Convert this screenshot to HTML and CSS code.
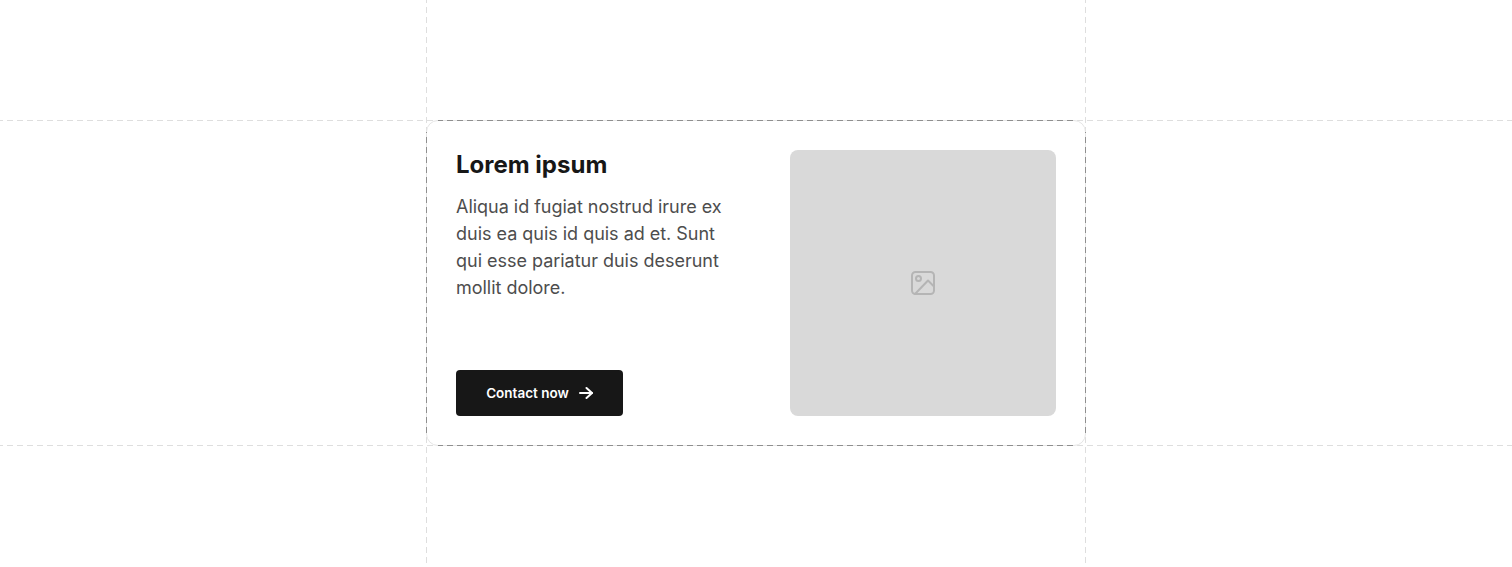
FILE: index.html
```html
<!DOCTYPE html>
<html lang="en">
<head>
  <meta charset="UTF-8" />
  <meta name="viewport" content="width=device-width, initial-scale=1.0"/>
  <title>Lorem ipsum</title>
  <link rel="stylesheet" href="styles.css">
</head>
<body>
  <div class="guide guide-h guide-top"></div>
  <div class="guide guide-h guide-bottom"></div>
  <div class="guide guide-v guide-left"></div>
  <div class="guide guide-v guide-right"></div>
  <div class="card">
    <div class="card-text">
      <div>
        <h2 class="card-title">Lorem ipsum</h2>
        <p class="card-desc">Aliqua id fugiat nostrud irure ex duis ea quis id quis ad et. Sunt qui esse pariatur duis deserunt mollit dolore.</p>
      </div>
      <a class="btn" href="#">
        <span>Contact now</span>
        <svg class="btn-icon" viewBox="0 0 14 14" fill="none" stroke="currentColor" stroke-width="2" stroke-linecap="round" stroke-linejoin="round">
          <path d="M1 7h12"/>
          <path d="M7.5 2l5.5 5-5.5 5"/>
        </svg>
      </a>
    </div>
    <div class="card-image">
      <svg class="image-icon" viewBox="0 0 24 24" fill="none" stroke="currentColor" stroke-width="2" stroke-linecap="round" stroke-linejoin="round">
        <rect x="1" y="1" width="22" height="22" rx="3.5"/>
        <circle cx="7.5" cy="7.5" r="2.5"/>
        <path d="M23 15.5l-6-6L4 23"/>
      </svg>
    </div>
  </div>
</body>
</html>
```

FILE: styles.css
```css
body {
  background: #fff;
  color: #171717;
  font-family: Inter, sans-serif;
  margin: 0;
  height: 567px;
  overflow: hidden;
  padding-top: 120px;
  box-sizing: border-box;
}
.guide {
  position: absolute;
}
.guide-h {
  left: 0;
  right: 0;
  height: 1px;
  background: repeating-linear-gradient(90deg, #dedede 0 3px, transparent 3px 7px, #dedede 7px 10px);
}
.guide-v {
  top: 0;
  bottom: 0;
  width: 1px;
  background: repeating-linear-gradient(180deg, #dedede 0 3px, transparent 3px 7px, #dedede 7px 10px);
}
.guide-top { top: 120px; }
.guide-bottom { top: 445px; }
.guide-left { left: 426px; }
.guide-right { left: 1085px; }
.card {
  position: relative;
  width: 660px;
  height: 326px;
  margin: 0 auto;
  box-sizing: border-box;
  padding: 29px;
  border: 1px solid #e6e6e6;
  border-radius: 12px;
  display: flex;
  justify-content: space-between;
}
/* darker dashes where the guides run along the card edge */
.card::before {
  content: "";
  position: absolute;
  inset: -1px 11px;
  background:
    repeating-linear-gradient(90deg, #8f8f8f 0 5px, transparent 5px 9px, #8f8f8f 9px 10px) 0 0 / 100% 1px no-repeat,
    repeating-linear-gradient(90deg, #8f8f8f 0 5px, transparent 5px 9px, #8f8f8f 9px 10px) 0 100% / 100% 1px no-repeat;
}
.card::after {
  content: "";
  position: absolute;
  inset: 11px -1px;
  background:
    repeating-linear-gradient(180deg, #8f8f8f 0 1px, transparent 1px 5px, #8f8f8f 5px 10px) 0 0 / 1px 100% no-repeat,
    repeating-linear-gradient(180deg, #8f8f8f 0 1px, transparent 1px 5px, #8f8f8f 5px 10px) 100% 0 / 1px 100% no-repeat;
}
.card-text {
  width: 278px;
  display: flex;
  flex-direction: column;
  justify-content: space-between;
  align-items: flex-start;
}
.card-title {
  font-size: 24px;
  line-height: 29px;
  font-weight: 700;
  margin: 0 0 14px 0;
}
.card-desc {
  font-size: 18px;
  line-height: 27px;
  letter-spacing: -0.02px;
  color: #4d4d4d;
  margin: 0;
}
.btn {
  background: #171717;
  color: #fff;
  font-size: 13.5px;
  line-height: 16px;
  font-weight: 600;
  text-decoration: none;
  border-radius: 4px;
  width: 167px;
  height: 46px;
  display: flex;
  align-items: center;
  justify-content: center;
  gap: 10px;
}
.btn-icon {
  width: 14px;
  height: 14px;
}
.card-image {
  width: 266px;
  height: 266px;
  background: #d9d9d9;
  border-radius: 8px;
  color: #b5b5b5;
  display: flex;
  align-items: center;
  justify-content: center;
}
.image-icon {
  width: 24px;
  height: 24px;
}
```
